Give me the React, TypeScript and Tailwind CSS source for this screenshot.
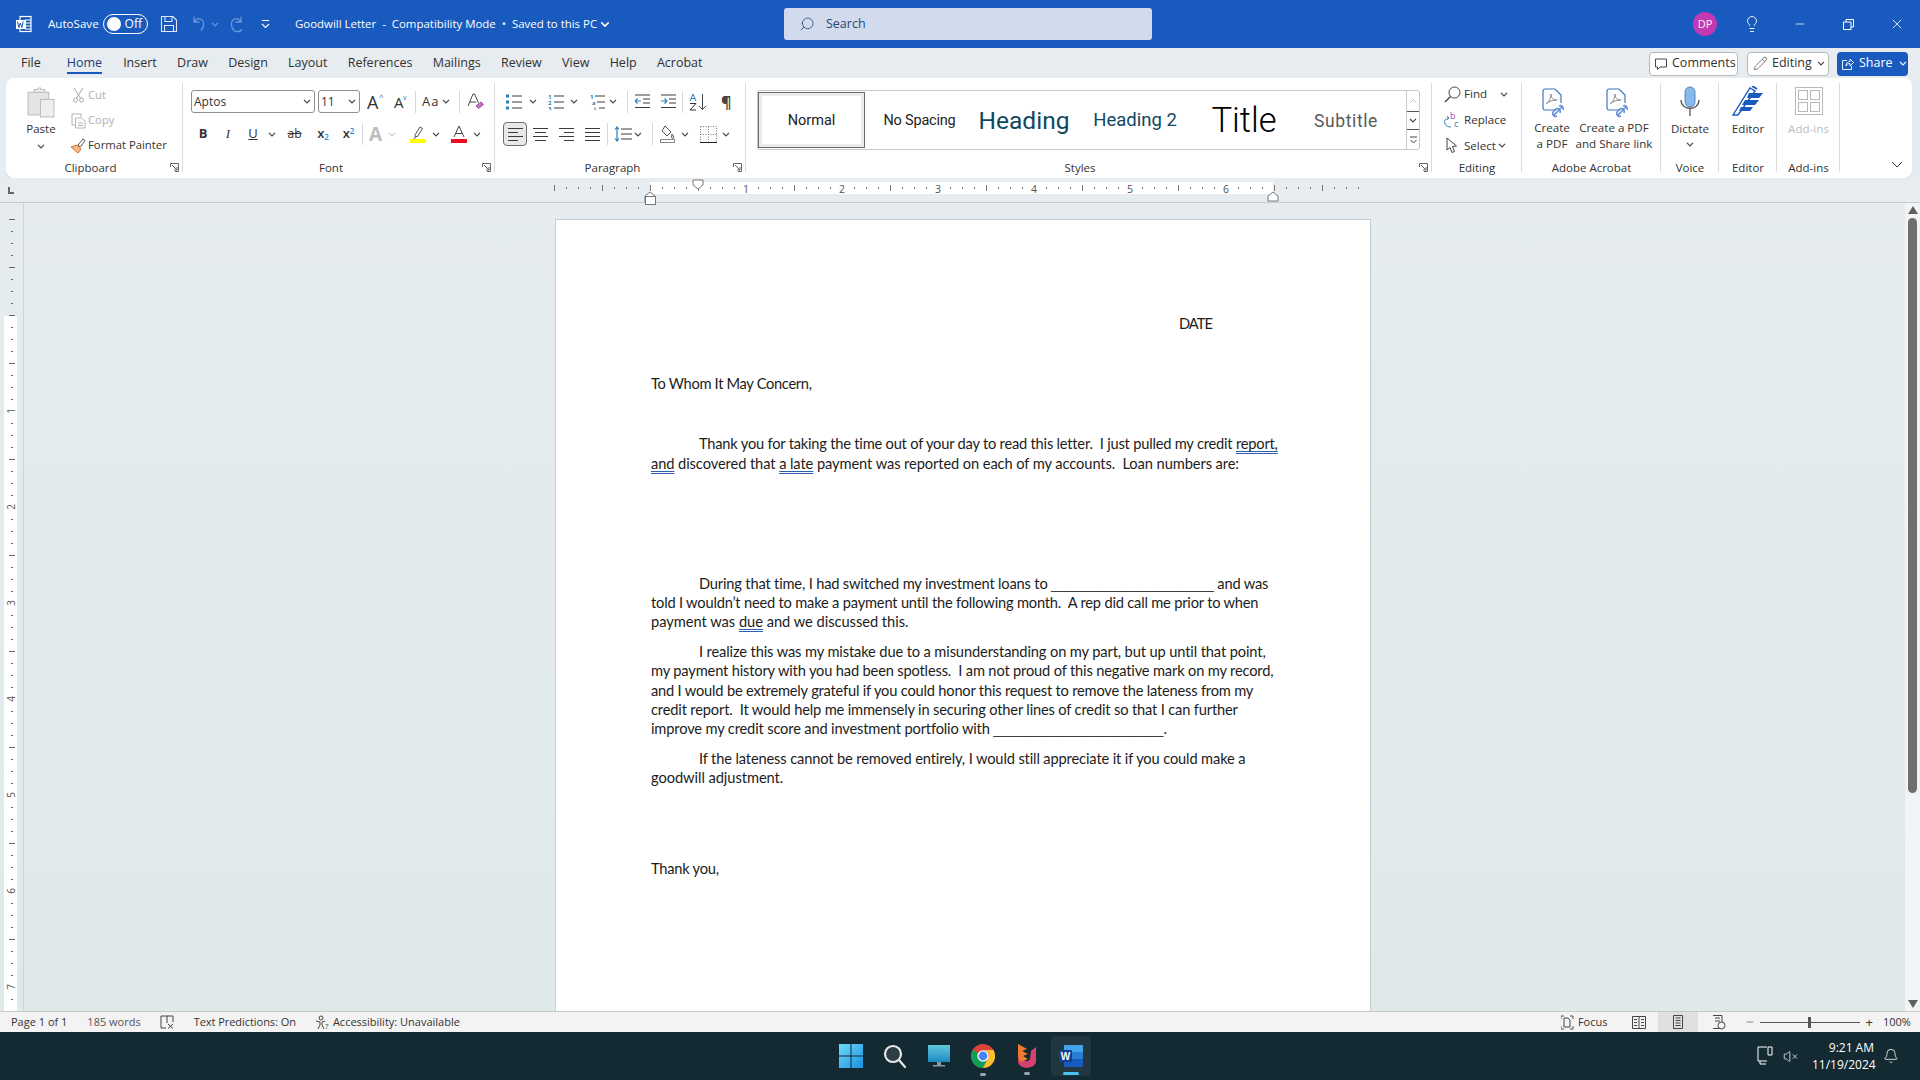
import React from "react";
import { Bell, Lightbulb, Minus, Pencil, VolumeX, X, Search } from "lucide-react";

const Chev = ({ c = "#444", cls = "" }: { c?: string; cls?: string }) => (
  <svg width="8" height="5" viewBox="0 0 8 5" className={"shrink-0 " + cls}>
    <path d="M1 .8l3 3 3-3" fill="none" stroke={c} strokeWidth="1.2" />
  </svg>
);

const Launcher = ({ cls }: { cls: string }) => (
  <svg width="9" height="9" viewBox="0 0 9 9" className={"absolute bottom-[6px] " + cls}>
    <path d="M.5 4V.5H8.5V8.5H5M2 2l5 5M7 4v3H4" fill="none" stroke="#666" strokeWidth="1" />
  </svg>
);

const Sep = ({ cls = "h-[26px]" }: { cls?: string }) => <div className={"w-px bg-[#d8d8d8] shrink-0 " + cls} />;

const Group = ({ w, label, children, launcher, labelCls = "" }: { w: string; label: string; children: React.ReactNode; launcher?: string; labelCls?: string }) => (
  <div className={"relative h-full flex flex-col shrink-0 " + w}>
    <div className="absolute right-0 top-[5px] bottom-[6px] w-px bg-[#dcdcdc]" />
    <div className="flex-1 min-h-0">{children}</div>
    <div className={"h-[20px] flex items-center justify-center text-[11.5px] text-[#333] " + labelCls}>{label}</div>
    {launcher && <Launcher cls={launcher} />}
  </div>
);

const Lines = ({ align = "left", w = 15 }: { align?: string; w?: number }) => {
  const ws = align === "left" ? [w, w - 5, w, w - 5] : align === "center" ? [w, w - 4, w, w - 4] : align === "right" ? [w, w - 5, w, w - 5] : [w, w, w, w];
  return (
    <svg width={w} height="13" viewBox={`0 0 ${w} 13`} className="shrink-0">
      {ws.map((l, i) => {
        const x = align === "left" || align === "just" ? 0 : align === "center" ? (w - l) / 2 : w - l;
        return <rect key={i} x={x} y={i * 4} width={l} height="1" fill="#3c3c3c" />;
      })}
    </svg>
  );
};

const WordLogo = () => (
  <svg width="17" height="18" viewBox="0 0 17 18" className="shrink-0">
    <rect x="5" y="1.5" width="11" height="15" fill="none" stroke="#fff" strokeWidth="1.2" />
    <path d="M10 5h6M10 8h6M10 11h6M10 14h6" stroke="#fff" strokeWidth="1" />
    <rect x="1" y="5" width="10" height="9" fill="#fff" />
    <path d="M2.5 6.5l1.3 6 1.5-4.5 1.5 4.5 1.4-6" fill="none" stroke="#185abd" strokeWidth="1" />
  </svg>
);

const TitleBar = () => (
  <div className="h-[48px] bg-[#185abd] flex items-center shrink-0 text-white">
    <div className="w-[784px] shrink-0 flex items-center pl-[15px]">
      <WordLogo />
      <span className="ml-[16px] w-[49px] text-[11.6px] whitespace-nowrap">AutoSave</span>
      <div className="ml-[6px] w-[45px] h-[20px] rounded-full border border-white flex items-center pl-[3px] pr-[5px] justify-between">
        <div className="w-[14px] h-[14px] rounded-full bg-white" />
        <span className="text-[12px] leading-none">Off</span>
      </div>
      <svg width="18" height="18" viewBox="0 0 18 18" className="ml-[12px]">
        <path d="M1.5 1.5H13l3.5 3.5v11.5H1.5zM5 1.5v5h7v-5M4.5 16.5v-6h9v6" fill="none" stroke="#dfe7f5" strokeWidth="1.1" />
      </svg>
      <svg width="17" height="18" viewBox="0 0 17 18" className="ml-[11px]">
        <path d="M5 1.5V7h5.5M5 7c2-3 5-4 7.5-2.5 3 2 3 7-.5 11" fill="none" stroke="#6b97dd" strokeWidth="1.3" />
      </svg>
      <Chev c="#6b97dd" cls="ml-[5px]" />
      <svg width="17" height="18" viewBox="0 0 17 18" className="ml-[10px]">
        <path d="M12 1.5V7H6.5M12 7C10 4 7 3 4.5 4.500c-3 2-3 7 .5 11 2.500 2 6 1.500 8-1" fill="none" stroke="#6b97dd" strokeWidth="1.3" />
      </svg>
      <svg width="9" height="10" viewBox="0 0 9 10" className="ml-[15px]">
        <path d="M1 1.5h7M1 5l3.5 3.500L8 5" fill="none" stroke="#fff" strokeWidth="1.1" />
      </svg>
      <span className="ml-[25px] text-[11.45px] whitespace-pre">Goodwill Letter  -  Compatibility Mode  •  Saved to this PC</span>
      <Chev c="#fff" cls="ml-[4px] scale-125" />
    </div>
    <div className="w-[368px] h-[32px] rounded-[3px] bg-[#d1dbed] flex items-center pl-[15px] text-[#27466f]">
      <Search size={16} strokeWidth={1.2} className="-scale-x-100" />
      <span className="ml-[11px] text-[12.5px]">Search</span>
    </div>
    <div className="flex-1 flex items-center">
      <div className="ml-[541px] w-[24px] h-[24px] rounded-full bg-[#c239b3] flex items-center justify-center text-[11px] text-[#f5f5f5]">DP</div>
      <Lightbulb size={18} strokeWidth={1.2} className="ml-[26px]" />
      <Minus size={14} strokeWidth={1.3} className="ml-[32px]" />
      <svg width="11" height="11" viewBox="0 0 11 11" className="ml-[36px]">
        <path d="M.5 3h7.5v7.5H.5zM3 3V.5h7.5V8H8" fill="none" stroke="#fff" strokeWidth="1" />
      </svg>
      <X size={16} strokeWidth={1.2} className="ml-[35px]" />
    </div>
  </div>
);

const TABS = ["Insert", "Draw", "Design", "Layout", "References", "Mailings", "Review", "View", "Help", "Acrobat"];

const TabRow = () => (
  <div className="h-[30px] bg-[#e6ecf0] flex items-center shrink-0 relative text-[#323130] pt-[1px]">
    <span className="ml-[21px] text-[12.5px]">File</span>
    <div className="ml-[26px] relative h-full flex items-center text-[12.5px] font-medium text-[#1d3f77]">
      Home
      <div className="absolute left-0 right-0 bottom-[4px] h-[2px] bg-[#185abd]" />
    </div>
    <div className="ml-[21px] flex gap-[20.25px] text-[12.5px]">
      {TABS.map((t) => (
        <span key={t}>{t}</span>
      ))}
    </div>
    <div className="ml-auto flex items-center mr-[12px] text-[12.5px]">
      <div className="w-[89px] h-[24px] rounded-[4px] bg-white border border-[#b8b8b8] flex items-center pl-[5px]">
        <svg width="12" height="12" viewBox="0 0 12 12"><path d="M.5 1h11v8H5L2.5 11.5V9H.5z" fill="none" stroke="#333" strokeWidth=".9" /></svg>
        <span className="ml-[5px]">Comments</span>
      </div>
      <div className="ml-[9px] w-[82px] h-[24px] rounded-[4px] bg-white border border-[#b8b8b8] flex items-center pl-[5px]">
        <Pencil size={15} strokeWidth={1} />
        <span className="ml-[4px]">Editing</span>
        <Chev cls="ml-[5px]" />
      </div>
      <div className="ml-[8px] w-[71px] h-[24px] rounded-[4px] bg-[#185abd] text-white flex items-center pl-[5px]">
        <svg width="12" height="12" viewBox="0 0 12 12"><path d="M5 2.5H.5v9h9V8M4 8c0-3 2-4.500 4-4.500V1l3.500 3.500L8 8V5.500C6 5.500 4.500 6.500 4 8z" fill="none" stroke="#fff" strokeWidth=".9" /></svg>
        <span className="ml-[5px]">Share</span>
        <Chev c="#fff" cls="ml-[6px]" />
      </div>
    </div>
  </div>
);

const Clipboard = () => (
  <Group w="w-[175px]" label="Clipboard" launcher="right-[4px]" labelCls="pr-[10px]">
    <div className="flex h-full">
      <div className="w-[60px] pl-[6px] flex flex-col items-center pt-[9px]">
        <svg width="28" height="31" viewBox="0 0 27 30">
          <path d="M1 5h20v22H1z" fill="#e4e4e4" stroke="#bdbdbd" />
          <path d="M7 5V2.500h3.500L11 1h2l.5 1.500H17V5z" fill="#f2f2f2" stroke="#bdbdbd" />
          <rect x="13" y="12" width="13" height="17" fill="#eeeeee" stroke="#bdbdbd" />
        </svg>
        <span className="text-[11.5px] mt-[2px] text-[#333]">Paste</span>
        <Chev cls="mt-[7px]" />
      </div>
      <div className="pt-[5px] text-[11.3px] flex flex-col">
        <div className="h-[25px] flex items-center text-[#b0b0b0]">
          <div className="w-[20px] flex justify-center">
            <svg width="11" height="16" viewBox="0 0 11 16"><path d="M1 1l6.500 10M10 1L3.500 11" stroke="#aaa" fill="none" /><circle cx="2.500" cy="13" r="2" fill="none" stroke="#aaa" /><circle cx="8.500" cy="13" r="2" fill="none" stroke="#aaa" /></svg>
          </div>
          Cut
        </div>
        <div className="h-[26px] flex items-center text-[#b0b0b0]">
          <div className="w-[20px] flex justify-center">
            <svg width="15" height="16" viewBox="0 0 15 16"><path d="M5 1H1v11h3M5 1h5v3" fill="none" stroke="#b5b5b5" /><path d="M4.500 5h6l3.500 3v7H4.500z" fill="none" stroke="#b5b5b5" /><path d="M7 10h5M7 12.500h5" stroke="#b5b5b5" /></svg>
          </div>
          Copy
        </div>
        <div className="h-[25px] flex items-center text-[#333]">
          <div className="w-[20px] flex justify-center">
            <svg width="16" height="16" viewBox="0 0 16 16"><path d="M7 7l4 4-3 4-7-6z" fill="#f2b78d" stroke="#d8712a" /><path d="M8 7l5-6 2 1.500-4.500 6.500z" fill="#fff" stroke="#555" /></svg>
          </div>
          Format Painter
        </div>
      </div>
    </div>
  </Group>
);

const FontGroup = () => (
  <Group w="w-[312px]" label="Font" launcher="right-[4px]" labelCls="pr-[16px]">
    <div className="pt-[12px] text-[#333]">
      <div className="flex items-center h-[23px] pl-[8px]">
        <div className="w-[124px] h-[23px] border border-[#8f8f8f] rounded-[3px] flex items-center justify-between pl-[2px] pr-[3px] text-[12px]">
          Aptos
          <Chev />
        </div>
        <div className="ml-[3px] w-[42px] h-[23px] border border-[#8f8f8f] rounded-[3px] flex items-center justify-between pl-[2px] pr-[3px] text-[12px]">
          11
          <Chev />
        </div>
        <div className="ml-[7px] w-[14px] relative text-[18px] leading-[22px]">A<span className="absolute left-[12px] top-[1px] text-[8px] leading-[10px] text-[#2b6cb0]">^</span></div>
        <div className="ml-[13px] w-[10px] relative text-[15px] leading-[20px]">A<span className="absolute left-[9px] top-[1px] text-[7px] leading-[10px] text-[#2b6cb0]">v</span></div>
        <Sep cls="h-[22px] ml-[11px]" />
        <span className="ml-[6px] text-[13px] tracking-[1px]">Aa</span>
        <Chev cls="ml-[3px]" />
        <Sep cls="h-[22px] ml-[9px]" />
        <svg width="17" height="17" viewBox="0 0 17 17" className="ml-[7px]">
          <path d="M1 13L6 1h1.500l4 9M3 9h6" fill="none" stroke="#444" />
          <path d="M9 13l5-4 2.500 2.500-5 4z" fill="#c66fc8" stroke="#8f3b93" strokeWidth=".8" />
        </svg>
      </div>
      <div className="flex items-center h-[24px] mt-[9px] pl-[7px]">
        <div className="w-[26px] text-center text-[13px] font-bold">B</div>
        <div className="w-[24px] text-center text-[13px] italic font-['Liberation_Serif',serif]">I</div>
        <div className="w-[26px] text-center text-[13px] underline">U</div>
        <div className="w-[12px] flex justify-center"><Chev /></div>
        <div className="w-[33px] text-center text-[12px] line-through leading-none">ab</div>
        <div className="w-[24px] text-center text-[13px] font-semibold">x<sub className="text-[8px] text-[#2b88d8]">2</sub></div>
        <div className="w-[27px] text-center text-[13px] font-semibold">x<sup className="text-[8px] text-[#2b88d8]">2</sup></div>
        <Sep cls="h-[22px]" />
        <div className="w-[25px] text-center text-[19px] leading-[24px] font-bold text-[#bdbdbd]">A</div>
        <div className="w-[8px] flex justify-center"><Chev c="#c8c8c8" /></div>
        <svg width="16" height="18" viewBox="0 0 16 18" className="ml-[14px]">
          <path d="M5 10l5-8 2.500 1.500-5 8H5z" fill="#fff" stroke="#555" />
          <path d="M5 12l-2 1.500h3z" fill="#555" />
          <rect y="14" width="16" height="4" fill="#ffff00" />
        </svg>
        <Chev cls="ml-[6px]" />
        <svg width="16" height="18" viewBox="0 0 16 18" className="ml-[11px]">
          <path d="M3 12L8 1l5 11M4.500 8.500h7" fill="none" stroke="#444" />
          <rect y="14" width="16" height="4" fill="#e81123" />
        </svg>
        <Chev cls="ml-[6px]" />
      </div>
    </div>
  </Group>
);

const BulletIcon = ({ w, kind }: { w: number; kind: string }) => (
  <svg width={w} height="16" viewBox={`0 0 ${w} 16`} className="shrink-0">
    {[2, 8, 14].map((y, i) => (
      <g key={y}>
        {kind === "b" && <rect x="0" y={y - 1.5} width="3" height="3" fill="#2c7fb8" />}
        {kind === "n" && <text x="0" y={y + 2.5} fontSize="6" fontWeight="700" fill="#2c7fb8">{i + 1}</text>}
        {kind === "m" && <text x={i * 2} y={y + 2.5} fontSize="6" fontWeight="700" fill="#2c7fb8">{["1", "a", "i"][i]}</text>}
        <rect x={kind === "m" ? 5 + i * 2 : 6} y={y - 0.5} width={kind === "m" ? w - 5 - i * 2 : w - 6} height="1" fill="#3c3c3c" />
      </g>
    ))}
  </svg>
);

const IndentIcon = ({ rev }: { rev?: boolean }) => (
  <svg width="15" height="15" viewBox="0 0 15 15" className="shrink-0">
    <path d="M0 1h15M8 5h7M8 9h7M0 13.500h15" stroke="#3c3c3c" />
    <path d={rev ? "M0 7h6M3.500 4.500L6 7l-2.500 2.500" : "M6 7H0M2.500 4.500L0 7l2.500 2.500"} stroke="#2c7fb8" fill="none" strokeWidth="1.1" />
  </svg>
);

const ParagraphGroup = () => (
  <Group w="w-[251px]" label="Paragraph" launcher="right-[4px]" labelCls="pr-[16px]">
    <div className="pt-[12px] text-[#333]">
      <div className="flex items-center h-[23px] pl-[11px]">
        <BulletIcon w={16} kind="b" />
        <Chev cls="ml-[7px]" />
        <div className="ml-[11px] flex"><BulletIcon w={16} kind="n" /></div>
        <Chev cls="ml-[6px]" />
        <div className="ml-[12px] flex"><BulletIcon w={15} kind="m" /></div>
        <Chev cls="ml-[4px]" />
        <Sep cls="h-[22px] ml-[10px]" />
        <div className="ml-[7px]"><IndentIcon /></div>
        <div className="ml-[11px]"><IndentIcon rev /></div>
        <Sep cls="h-[22px] ml-[6px]" />
        <svg width="18" height="18" viewBox="0 0 18 18" className="ml-[6px] shrink-0">
          <path d="M1 8l3-7 3 7M2 5.500h4" fill="none" stroke="#2c7fb8" />
          <path d="M1 10.500h6l-6 6.500h6" fill="none" stroke="#333" />
          <path d="M13.500 1v15.500M10 13l3.500 3.500L17 13" fill="none" stroke="#444" />
        </svg>
        <span className="ml-[14px] text-[16px] leading-[20px] font-bold text-[#444]">¶</span>
      </div>
      <div className="flex items-center h-[24px] mt-[9px] pl-[8px]">
        <div className="w-[24px] h-[24px] rounded-[4px] bg-[#e8e8e8] border border-[#707070] flex items-center justify-center"><Lines align="left" /></div>
        <div className="ml-[6px]"><Lines align="center" /></div>
        <div className="ml-[11px]"><Lines align="right" /></div>
        <div className="ml-[11px]"><Lines align="just" /></div>
        <Sep cls="h-[22px] ml-[7px]" />
        <svg width="18" height="16" viewBox="0 0 18 16" className="ml-[6px] shrink-0">
          <path d="M7 3h11M7 8h11M7 13h11" stroke="#3c3c3c" />
          <path d="M3 1v14M1 3.500L3 1l2 2.500M1 12.500L3 15l2-2.500" fill="none" stroke="#2c7fb8" strokeWidth="1.2" />
        </svg>
        <Chev cls="ml-[2px]" />
        <Sep cls="h-[22px] ml-[10px]" />
        <svg width="15" height="18" viewBox="0 0 15 18" className="ml-[7px] shrink-0">
          <path d="M5 1l6 6-4 4-5-5zM12 9l2 3-1 1.500-1.500-1z" fill="none" stroke="#555" />
          <rect x=".5" y="14.500" width="14" height="3" fill="none" stroke="#888" />
        </svg>
        <Chev cls="ml-[6px]" />
        <svg width="17" height="17" viewBox="0 0 17 17" className="ml-[11px] shrink-0">
          <path d="M.5 .5h16v16M.5 .5v16M8.500 .5v16M.5 8.500h16" stroke="#777" strokeDasharray="1 1.500" fill="none" />
          <path d="M0 16.500h17" stroke="#222" />
        </svg>
        <Chev cls="ml-[5px]" />
      </div>
    </div>
  </Group>
);

const StylesGroup = () => (
  <Group w="w-[686px]" label="Styles" launcher="right-[4px]" labelCls="pr-[18px]">
    <div className="pt-[12px] pl-[11px]">
      <div className="w-[663px] h-[60px] border border-[#c8c8c8] rounded-[3px] flex items-center text-[#222] font-['Roboto',sans-serif]">
        <div className="w-[107px] h-[56px] border border-[#6b6b6b] flex items-center shrink-0">
          <div className="w-full h-full border-[3px] border-[#ebebeb] flex items-center justify-center text-[14.5px] pt-[2px]">Normal</div>
        </div>
        <div className="w-[109px] text-center text-[14.5px] shrink-0 tracking-[-0.2px] pt-[2px]">No Spacing</div>
        <div className="w-[100px] text-center text-[24.5px] text-[#0f4761] shrink-0 pt-[2px]">Heading</div>
        <div className="w-[122px] text-center text-[18.5px] text-[#0f4761] shrink-0 pt-[2px]">Heading 2</div>
        <div className="w-[96px] text-center text-[34.5px] text-black shrink-0 font-light pt-[2px]">Title</div>
        <div className="w-[108px] text-center text-[17.5px] text-[#595959] shrink-0 tracking-[0.6px] pt-[2px]">Subtitle</div>
        <div className="ml-[6px] w-[13px] h-full flex flex-col border-l border-[#c8c8c8]">
          <div className="h-[20px] flex items-center justify-center"><svg width="7" height="4" viewBox="0 0 7 4"><path d="M.5 3.500l3-3 3 3" fill="none" stroke="#c0c0c0" /></svg></div>
          <div className="h-[19px] border-y border-[#555] flex items-center justify-center"><Chev /></div>
          <div className="flex-1 flex items-center justify-center"><svg width="7" height="8" viewBox="0 0 7 8"><path d="M0 1h7M.5 4l3 3 3-3" fill="none" stroke="#444" /></svg></div>
        </div>
      </div>
    </div>
  </Group>
);

const EditingGroup = () => (
  <Group w="w-[90px]" label="Editing">
    <div className="pt-[3px] text-[11.6px] text-[#333] flex flex-col">
      <div className="h-[26px] flex items-center pl-[12px]">
        <svg width="17" height="17" viewBox="0 0 17 17"><circle cx="10.500" cy="6.500" r="5.500" fill="none" stroke="#444" /><path d="M6.500 10.500L1 16" stroke="#444" strokeWidth="1.4" /></svg>
        <span className="ml-[3px]">Find</span>
        <Chev cls="ml-[13px]" />
      </div>
      <div className="h-[26px] flex items-center pl-[12px]">
        <svg width="16" height="18" viewBox="0 0 16 18">
          <text x="6" y="8" fontSize="9" fill="#b146c2">b</text>
          <text x="10" y="16" fontSize="9" fill="#2c7fb8">c</text>
          <path d="M5 7C1 7 0 10 1 13c1 2 3 3 6 3M5 7L3 5M5 7L3 9" fill="none" stroke="#2c7fb8" />
        </svg>
        <span className="ml-[4px]">Replace</span>
      </div>
      <div className="h-[25px] flex items-center pl-[14px]">
        <svg width="12" height="17" viewBox="0 0 12 17"><path d="M1 1v12l3-2.500 2 5 2.500-1-2-5 4-.5z" fill="#fff" stroke="#444" /></svg>
        <span className="ml-[6px]">Select</span>
        <Chev cls="ml-[2px]" />
      </div>
    </div>
  </Group>
);

const PdfIcon = ({ cls = "" }: { cls?: string }) => (
  <svg width="26" height="30" viewBox="0 0 26 30" className={cls}>
    <path d="M17 22H6a2 2 0 01-2-2V3a2 2 0 012-2h10l6 6v8" fill="none" stroke="#4472c4" strokeWidth="1.2" />
    <path d="M7 16c3-2 5-6 5-10 0 4 2 6 6 6-4 0-8 1-11 4z" fill="none" stroke="#8a8a8a" strokeWidth="1" />
    <path d="M15 27l8-8M14 24l3-3a3 3 0 014 4M18 28a3 3 0 01-4-4M24 22a3 3 0 00-4-4" fill="none" stroke="#5b8fd8" strokeWidth="1.6" />
  </svg>
);

const BigLabel = ({ children, cls = "text-[#333]" }: { children: React.ReactNode; cls?: string }) => (
  <div className={"text-[11.6px] leading-[16px] text-center whitespace-nowrap " + cls}>{children}</div>
);

const AcrobatGroup = () => (
  <Group w="w-[139px]" label="Adobe Acrobat">
    <div className="flex pt-[10px] pl-[9px]">
      <div className="w-[42px] flex flex-col items-center">
        <PdfIcon />
        <BigLabel cls="mt-[2px] text-[#333]">Create<br />a PDF</BigLabel>
      </div>
      <div className="w-[76px] ml-[3px] flex flex-col items-center">
        <PdfIcon cls="ml-[4px]" />
        <BigLabel cls="mt-[2px] text-[#333]">Create a PDF<br />and Share link</BigLabel>
      </div>
    </div>
  </Group>
);

const RightGroups = () => (
  <>
    <Group w="w-[58px]" label="Voice">
      <div className="pt-[8px] flex flex-col items-center">
        <svg width="20" height="30" viewBox="0 0 20 30">
          <rect x="5" y="1" width="10" height="20" rx="5" fill="#87b9ea" stroke="#3e6fa8" strokeWidth=".8" />
          <path d="M1 14c0 11 18 11 18 0M10 23v7" fill="none" stroke="#555" strokeWidth="1.3" />
        </svg>
        <BigLabel cls="mt-[5px] text-[#333]">Dictate</BigLabel>
        <Chev cls="mt-[5px]" />
      </div>
    </Group>
    <Group w="w-[58px]" label="Editor">
      <div className="pt-[8px] flex flex-col items-center">
        <svg width="32" height="30" viewBox="0 0 32 30">
          <path d="M1 29L18 2l5 3L6 29z" fill="#fff" stroke="#185abd" strokeWidth="1.4" />
          <path d="M17 7h14l-4 5H15zM13 14h14l-4 5H10zM9 21h12l-3 4H7z" fill="#185abd" />
          <path d="M20 0l5 3" stroke="#185abd" strokeWidth="2" />
        </svg>
        <BigLabel cls="mt-[5px] text-[#333]">Editor</BigLabel>
      </div>
    </Group>
    <Group w="w-[63px]" label="Add-ins">
      <div className="pt-[9px] flex flex-col items-center">
        <svg width="28" height="28" viewBox="0 0 28 28">
          <rect x=".5" y=".5" width="27" height="27" fill="none" stroke="#b8b8b8" />
          <rect x="3.500" y="3.500" width="9" height="9" fill="none" stroke="#b8b8b8" />
          <rect x="15.500" y="3.500" width="9" height="9" fill="none" stroke="#b8b8b8" />
          <rect x="3.500" y="15.500" width="9" height="9" fill="none" stroke="#b8b8b8" />
          <rect x="15.500" y="15.500" width="9" height="9" fill="none" stroke="#b8b8b8" />
        </svg>
        <BigLabel cls="mt-[6px] text-[#bdbdbd]">Add-ins</BigLabel>
      </div>
    </Group>
  </>
);

const Ribbon = () => (
  <div className="h-[100px] bg-[#e6ecf0] shrink-0 pl-[6px] pr-[8px]">
    <div className="h-full bg-white rounded-[8px] flex relative pl-[2px] shadow-[0_1px_1px_rgba(0,0,0,0.1)]">
      <Clipboard />
      <FontGroup />
      <ParagraphGroup />
      <StylesGroup />
      <EditingGroup />
      <AcrobatGroup />
      <RightGroups />
      <svg width="12" height="7" viewBox="0 0 12 7" className="absolute right-[9px] bottom-[10px]">
        <path d="M1 1l5 5 5-5" fill="none" stroke="#333" />
      </svg>
    </div>
  </div>
);

const hticks = Array.from({ length: 68 }, (_, i) => 554 + i * 12);

const HRuler = () => (
  <div className="h-[25px] bg-[#e6ecf0] border-b border-[#c6cbce] shrink-0 relative">
    <svg width="1920" height="24" viewBox="0 0 1920 24" className="block">
      <rect x="650" y="4" width="623" height="12" fill="#fff" />
      <path d="M9 9v6h5" fill="none" stroke="#666" strokeWidth="2" />
      {hticks.map((x) => {
        const rel = x - 650;
        if (rel % 96 === 0 && rel > 0 && rel < 600) return null;
        const half = rel % 48 === 0;
        return <rect key={x} x={x} y={half ? 7 : 9} width="1" height={half ? 6 : 2} fill="#777" />;
      })}
      {[1, 2, 3, 4, 5, 6].map((n) => (
        <text key={n} x={650 + n * 96} y="14.500" textAnchor="middle" fontSize="10.500" fontFamily="'Open Sans',sans-serif" fill="#555">{n}</text>
      ))}
      <path d="M693 2h10v5l-5 4-5-4z" fill="#fff" stroke="#777" />
      <path d="M645 24v-6l5-4 5 4v6z" fill="#fff" stroke="#777" />
      <path d="M1268 23v-5l5-4 5 4v5z" fill="#fff" stroke="#777" />
    </svg>
    <div className="absolute left-[645px] top-[18px] w-[11px] h-[9px] bg-white border border-[#777]" />
  </div>
);

const VRuler = () => (
  <div className="w-[24px] shrink-0 border-r border-[#cfd4d7]">
    <svg width="23" height="808" viewBox="0 0 23 808" className="block">
      <rect x="4" y="113" width="13" height="695" fill="#fff" />
      {Array.from({ length: 68 }, (_, i) => {
        const y = 16 + i * 12;
        const rel = y - 112;
        if (rel % 96 === 0 && rel > 0) return null;
        const half = rel % 48 === 0;
        return <rect key={y} x={half ? 9 : 11} y={y} width={half ? 6 : 2} height="1" fill="#666" />;
      })}
      {[1, 2, 3, 4, 5, 6, 7].map((n) => (
        <text key={n} x="0" y="0" transform={`translate(15 ${112 + n * 96}) rotate(-90)`} textAnchor="middle" fontSize="10" fontFamily="'Open Sans',sans-serif" fill="#555">{n}</text>
      ))}
    </svg>
  </div>
);

const Dbl = ({ children }: { children: React.ReactNode }) => (
  <span className="underline decoration-double decoration-[#2b5fb3] decoration-[1px] underline-offset-[2px]">{children}</span>
);

const Blank = ({ children }: { children: React.ReactNode }) => (
  <span className="font-['Liberation_Sans',sans-serif] text-[13.3px] tracking-normal">{children}</span>
);

const P = ({ children, cls = "" }: { children?: React.ReactNode; cls?: string }) => <div className={"mb-[10.9px] min-h-[19.2px] " + cls}>{children}</div>;
const L = ({ children, i, t = "" }: { children: React.ReactNode; i?: boolean; t?: string }) => (
  <div className={"h-[19.2px] whitespace-pre " + (i ? "pl-[48px] " : "") + t}>{children}</div>
);

const DocPage = () => (
  <div className="ml-[531px] mt-[16px] w-[816px] h-[900px] bg-white border border-[#c6cbce] pl-[95px] pt-[94px] text-[14.67px] leading-[19.2px] text-[#1c1c1c] font-['Lato',sans-serif]">
    <P cls="pl-[528px] tracking-[-1px]">DATE</P>
    <P />
    <P cls="tracking-[-0.32px]">To Whom It May Concern,</P>
    <P />
    <P>
      <L i t="tracking-[-0.21px]">Thank you for taking the time out of your day to read this letter.  I just pulled my credit <Dbl>report,</Dbl></L>
      <L t="tracking-[-0.09px]"><Dbl>and</Dbl> discovered that <Dbl>a late</Dbl> payment was reported on each of my accounts.  Loan numbers are:</L>
    </P>
    <P />
    <P />
    <P />
    <P>
      <L i t="tracking-[-0.18px]">During that time, I had switched my investment loans to <Blank>______________________</Blank> and was</L>
      <L t="tracking-[-0.2px]">told I wouldn’t need to make a payment until the following month.  A rep did call me prior to when</L>
      <L t="tracking-[-0.03px]">payment was <Dbl>due</Dbl> and we discussed this.</L>
    </P>
    <P>
      <L i t="tracking-[-0.13px]">I realize this was my mistake due to a misunderstanding on my part, but up until that point,</L>
      <L t="tracking-[-0.17px]">my payment history with you had been spotless.  I am not proud of this negative mark on my record,</L>
      <L t="tracking-[-0.2px]">and I would be extremely grateful if you could honor this request to remove the lateness from my</L>
      <L t="tracking-[-0.165px]">credit report.  It would help me immensely in securing other lines of credit so that I can further</L>
      <L t="tracking-[-0.16px]">improve my credit score and investment portfolio with <Blank>_______________________</Blank>.</L>
    </P>
    <P>
      <L i t="tracking-[-0.14px]">If the lateness cannot be removed entirely, I would still appreciate it if you could make a</L>
      <L t="tracking-[-0.06px]">goodwill adjustment.</L>
    </P>
    <P />
    <P />
    <P cls="tracking-[-0.24px]">Thank you,</P>
  </div>
);

const Scrollbar = () => (
  <div className="w-[15px] shrink-0 bg-[#f1f3f4] flex flex-col items-center">
    <svg width="10" height="8" viewBox="0 0 10 8" className="mt-[3px]"><path d="M5 0l5 8H0z" fill="#606060" /></svg>
    <div className="w-[9px] h-[575px] mt-[4px] rounded-t-full rounded-b-full bg-[#6e6e6e]" />
    <div className="flex-1" />
    <svg width="10" height="8" viewBox="0 0 10 8" className="mb-[3px]"><path d="M5 8l5-8H0z" fill="#606060" /></svg>
  </div>
);

const StatusBar = () => (
  <div className="h-[21px] bg-[#f3f3f3] border-t border-[#c8c8c8] flex items-center shrink-0 text-[11px] text-[#333]">
    <span className="ml-[11px]">Page 1 of 1</span>
    <span className="ml-[20px] text-[#555]">185 words</span>
    <svg width="14" height="14" viewBox="0 0 14 14" className="ml-[19px]"><path d="M7 1H1v12h5M7 1v7M7 1h6v6" fill="none" stroke="#444" /><path d="M8 9l5 4.500M13 9l-5 4.500" stroke="#444" /></svg>
    <span className="ml-[20px] tracking-[-0.05px]">Text Predictions: On</span>
    <svg width="15" height="15" viewBox="0 0 15 15" className="ml-[19px]"><circle cx="6" cy="3" r="2" fill="none" stroke="#444" /><path d="M1 6l4 1v3l-2 4M10 6L7 7v3l2 4" fill="none" stroke="#444" /><text x="10" y="14" fontSize="8" fill="#444">?</text></svg>
    <span className="ml-[3px]">Accessibility: Unavailable</span>
    <svg width="13" height="15" viewBox="0 0 13 15" className="ml-[1101px]"><path d="M3 1H0v3M0 11v3h3M9 1h3v3M12 11v3H9" fill="none" stroke="#444" strokeWidth=".9" /><path d="M3 3h4l2 2v7H3z" fill="none" stroke="#444" /></svg>
    <span className="ml-[4px]">Focus</span>
    <svg width="14" height="13" viewBox="0 0 14 13" className="ml-[25px]"><path d="M.5 .5h13v12H.5zM7 .5v12M2 3.500h3M2 6.500h3M2 9.500h3M9 3.500h3M9 6.500h3M9 9.500h3" fill="none" stroke="#444" /></svg>
    <div className="ml-[12px] w-[40px] h-full bg-[#e0e0e0] flex items-center justify-center">
      <svg width="10" height="14" viewBox="0 0 10 14"><path d="M.5 .5h9v13h-9zM2.500 3h5M2.500 5.500h5M2.500 8h5M2.500 10.500h5" fill="none" stroke="#444" /></svg>
    </div>
    <svg width="14" height="15" viewBox="0 0 14 15" className="ml-[14px]"><path d="M1 .5h9v13H1M3 3h5M3 6h5" fill="none" stroke="#444" /><circle cx="9.500" cy="10.500" r="3.500" fill="#f3f3f3" stroke="#444" /></svg>
    <Minus size={10} strokeWidth={1.3} className="ml-[19px]" />
    <div className="ml-[5px] w-[100px] h-px bg-[#555] relative">
      <div className="absolute left-[48px] -top-[5px] w-[3px] h-[11px] bg-[#555]" />
    </div>
    <span className="ml-[5px] text-[13px] leading-[14px]">+</span>
    <span className="ml-[10px]">100%</span>
  </div>
);

const ChromeIcon = () => (
  <svg width="24" height="24" viewBox="0 0 24 24">
    <circle cx="12" cy="12" r="12" fill="#db4437" />
    <path d="M12 12L1.600 6A12 12 0 0012 24l6-10.400z" fill="#0f9d58" />
    <path d="M12 6h10.400A12 12 0 0112 24l6-12a6 6 0 00-6-6z" fill="#fbc02d" />
    <circle cx="12" cy="12" r="5.700" fill="#fff" />
    <circle cx="12" cy="12" r="4.400" fill="#4285f4" />
  </svg>
);

const Taskbar = () => (
  <div className="flex-1 bg-[#142a33] flex items-center relative text-white">
    <svg width="24" height="24" viewBox="0 0 24 24" className="ml-[839px]">
      <defs>
        <linearGradient id="win" x1="0" y1="0" x2="1" y2="1"><stop offset="0" stopColor="#6fdcfb" /><stop offset="1" stopColor="#1a8fe0" /></linearGradient>
      </defs>
      <path d="M0 0h11.500v11.500H0zM12.500 0H24v11.500H12.500zM0 12.500h11.500V24H0zM12.500 12.500H24V24H12.500z" fill="url(#win)" />
    </svg>
    <svg width="24" height="24" viewBox="0 0 24 24" className="ml-[20px]">
      <circle cx="10" cy="10" r="8" fill="#2b3d45" stroke="#e8e8e8" strokeWidth="2.200" />
      <path d="M16 16l6 7" stroke="#e8e8e8" strokeWidth="2.200" strokeLinecap="round" />
    </svg>
    <svg width="24" height="22" viewBox="0 0 24 22" className="ml-[20px]">
      <defs>
        <linearGradient id="mon" x1="0" y1="0" x2="0" y2="1"><stop offset="0" stopColor="#63c8dd" /><stop offset="1" stopColor="#1b8ac0" /></linearGradient>
      </defs>
      <rect x="1" y="0" width="22" height="17" fill="url(#mon)" />
      <rect x="10" y="17" width="4" height="3" fill="#8a9aa0" />
      <rect x="6" y="20" width="12" height="1.500" fill="#8a9aa0" />
    </svg>
    <div className="ml-[20px] relative flex">
      <ChromeIcon />
      <div className="absolute left-[9px] -bottom-[8px] w-[6px] h-[3px] rounded-full bg-[#9aa5aa]" />
    </div>
    <div className="ml-[20px] relative flex">
      <svg width="24" height="26" viewBox="0 0 24 26">
        <path d="M3 1l5 5 1 10c0 3 5 3 6 0l1-8 5-4v14c0 9-18 9-18 0z" fill="#d6416e" />
        <path d="M3 1l9 5-5 2 6 3-5 2 5 3-7 3c-2-2-3-5-3-8z" fill="#ee7b2f" />
      </svg>
      <div className="absolute left-[9px] -bottom-[6px] w-[6px] h-[3px] rounded-full bg-[#9aa5aa]" />
    </div>
    <div className="ml-[12px] w-[40px] h-[40px] rounded-[4px] bg-[#22363f] flex items-center justify-center relative">
      <svg width="24" height="22" viewBox="0 0 24 22">
        <rect x="5" y="0" width="19" height="7.500" rx="1" fill="#41a5ee" />
        <rect x="5" y="7" width="19" height="7.500" fill="#2b7cd3" />
        <rect x="5" y="14" width="19" height="8" rx="1" fill="#185abd" />
        <rect x="0" y="5" width="13" height="12" rx="1" fill="#103f91" />
        <text x="6.500" y="14.500" textAnchor="middle" fontSize="10" fontWeight="700" fill="#fff" fontFamily="'Liberation Sans',sans-serif">W</text>
      </svg>
      <div className="absolute bottom-[1px] left-[12px] w-[16px] h-[3px] rounded-full bg-[#4cc2f1]" />
    </div>
    <svg width="16" height="20" viewBox="0 0 16 20" className="ml-[666px]"><path d="M10 1H1v14h9M3 15v3h6M11 1h4v8h-4z" fill="none" stroke="#fff" strokeWidth="1" /></svg>
    <VolumeX size={15} strokeWidth={1.2} className="ml-[10px]" />
    <div className="ml-[14px] w-[62px] text-right text-[12px] leading-[17px]">
      <div>9:21 AM</div>
      <div>11/19/2024</div>
    </div>
    <Bell size={16} strokeWidth={1.2} className="ml-[9px]" />
  </div>
);

export default function App() {
  return (
    <div className="w-[1920px] h-[1080px] flex flex-col overflow-hidden bg-white font-['Open_Sans',sans-serif]">
      <TitleBar />
      <TabRow />
      <Ribbon />
      <HRuler />
      <div className="h-[808px] shrink-0 flex bg-gradient-to-b from-[#e6ecf0] to-[#dfe9ea] overflow-hidden">
        <VRuler />
        <div className="flex-1 min-w-0 overflow-hidden">
          <DocPage />
        </div>
        <Scrollbar />
      </div>
      <StatusBar />
      <Taskbar />
    </div>
  );
}
